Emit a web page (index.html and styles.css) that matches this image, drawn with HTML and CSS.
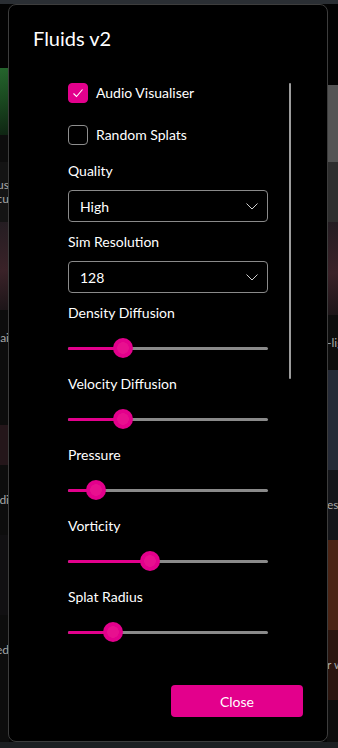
FILE: index.html
```html
<!DOCTYPE html>
<html lang="en">
<head>
<meta charset="utf-8">
<title>Fluids v2</title>
<link rel="stylesheet" href="styles.css">
</head>
<body>
<div class="bg">
  <div class="topbar"></div>
  <div class="cols">
    <div class="strip left">
      <div class="band b-black" style="height:64px"></div>
      <div class="band b-green" style="height:67px"></div>
      <div class="band b-d1" style="height:27px"></div>
      <div class="band b-d2 txt" style="height:60px"><span>bus</span><span>ecu</span></div>
      <div class="band b-pink" style="height:88px"></div>
      <div class="band b-d1 txt" style="height:55px"><span>mai</span></div>
      <div class="band b-d1" style="height:60px"></div>
      <div class="band b-red" style="height:40px"></div>
      <div class="band b-d1 txt" style="height:70px"><span>adi</span></div>
      <div class="band b-d3" style="height:80px"></div>
      <div class="band b-d1 txt" style="height:70px"><span>ed</span></div>
      <div class="band b-d1" style="height:60px"></div>
    </div>
    <div class="gap"></div>
    <div class="strip right">
      <div class="band b-black" style="height:81px"></div>
      <div class="band b-gray" style="height:77px"></div>
      <div class="band b-gray2" style="height:60px"></div>
      <div class="band b-pink" style="height:93px"></div>
      <div class="band b-d1 txt" style="height:55px"><span>-lig</span></div>
      <div class="band b-blue" style="height:100px"></div>
      <div class="band b-d4 txt" style="height:70px"><span>es.</span></div>
      <div class="band b-brown" style="height:90px"></div>
      <div class="band b-brown2 txt" style="height:70px"><span>r w</span></div>
      <div class="band b-d1" style="height:60px"></div>
    </div>
  </div>
  <div class="botbar"></div>
</div>

<div class="dialog">
  <h1 class="title">Fluids v2</h1>
  <div class="scroll">
    <div class="content">
      <label class="check">
        <span class="box on"><svg width="20" height="20" viewBox="0 0 20 20"><polyline points="5.5,10.5 8.5,13.5 14.5,6.5" fill="none" stroke="#fff" stroke-width="1.1"/></svg></span>
        <span class="check-text">Audio Visualiser</span>
      </label>
      <label class="check">
        <span class="box"></span>
        <span class="check-text">Random Splats</span>
      </label>

      <div class="field-label first">Quality</div>
      <div class="combo"><span>High</span><svg width="12" height="7" viewBox="0 0 12 7"><path d="M0.5 0.5 L6 6 L11.5 0.5" fill="none" stroke="#cfcfcf" stroke-width="1"/></svg></div>

      <div class="field-label">Sim Resolution</div>
      <div class="combo"><span>128</span><svg width="12" height="7" viewBox="0 0 12 7"><path d="M0.5 0.5 L6 6 L11.5 0.5" fill="none" stroke="#cfcfcf" stroke-width="1"/></svg></div>

      <div class="field-label">Density Diffusion</div>
      <div class="slider" style="--v:0.25"><div class="track"><div class="fill"></div></div><div class="thumb"></div></div>

      <div class="field-label">Velocity Diffusion</div>
      <div class="slider" style="--v:0.25"><div class="track"><div class="fill"></div></div><div class="thumb"></div></div>

      <div class="field-label">Pressure</div>
      <div class="slider" style="--v:0.1"><div class="track"><div class="fill"></div></div><div class="thumb"></div></div>

      <div class="field-label">Vorticity</div>
      <div class="slider" style="--v:0.4"><div class="track"><div class="fill"></div></div><div class="thumb"></div></div>

      <div class="field-label">Splat Radius</div>
      <div class="slider" style="--v:0.195"><div class="track"><div class="fill"></div></div><div class="thumb"></div></div>
    </div>
    <div class="scrollbar"></div>
  </div>
  <div class="footer">
    <button class="btn">Close</button>
  </div>
</div>
</body>
</html>
```

FILE: styles.css
```css
* { box-sizing: border-box; }
html, body {
  margin: 0;
  padding: 0;
  width: 338px;
  height: 748px;
  overflow: hidden;
  background: #0a0a0a;
  font-family: "Segoe UI", Lato, "Noto Sans", sans-serif;
  color: #fff;
}

/* background page */
.bg {
  width: 338px;
  height: 748px;
  display: flex;
  flex-direction: column;
}
.topbar {
  height: 4px;
  background: #2a2e33;
  flex: none;
}
.botbar {
  height: 6px;
  background: #1c1f22;
  flex: none;
}
.cols {
  flex: 1;
  display: flex;
  overflow: hidden;
}
.gap { flex: 1; background: #050505; }
.strip {
  display: flex;
  flex-direction: column;
  overflow: hidden;
}
.strip.left { width: 9px; }
.strip.right { width: 11px; }
.band { flex: none; }
.txt {
  display: flex;
  flex-direction: column;
  justify-content: center;
  font-size: 12px;
  line-height: 14px;
  color: #a8a8a8;
  white-space: nowrap;
}
.left .txt { align-items: flex-end; }
.right .txt { align-items: flex-start; }
.b-black { background: #030303; }
.b-green { background: linear-gradient(165deg, #25652d 0%, #1a4a20 45%, #0e2412 100%); }
.b-d1 { background: #0d0d0d; }
.b-d2 { background: #141414; }
.b-d3 { background: #111012; }
.b-d4 { background: #141519; }
.b-pink { background: linear-gradient(170deg, #241d22 0%, #3a2228 55%, #1c1518 100%); }
.b-red { background: #24161a; }
.b-gray { background: #545454; }
.b-gray2 { background: #2e2e2e; }
.b-blue { background: #252a36; }
.b-brown { background: #4a2415; }
.b-brown2 { background: #2a150f; }

/* dialog */
.dialog {
  position: absolute;
  left: 8px;
  top: 4px;
  width: 320px;
  height: 738px;
  background: #000;
  border: 1px solid #3d3d3d;
  border-radius: 8px;
  display: flex;
  flex-direction: column;
}
.title {
  margin: 0;
  padding: 19px 24px 0 24px;
  font-size: 20px;
  line-height: 28px;
  font-weight: 400;
  height: 78px;
  flex: none;
}
.scroll {
  position: relative;
  flex: 1;
}
.content {
  margin-left: 59px;
  width: 200px;
  display: flex;
  flex-direction: column;
}
.scrollbar {
  position: absolute;
  left: 280px;
  top: 0;
  width: 2px;
  height: 296px;
  background: #9c9c9c;
  border-radius: 1px;
}

.check {
  display: flex;
  align-items: center;
  gap: 8px;
  height: 20px;
  font-size: 14px;
  line-height: 20px;
  margin-bottom: 22px;
}
.check + .check { margin-bottom: 0; }
.box {
  width: 20px;
  height: 20px;
  border: 1px solid #8e8e8e;
  border-radius: 4px;
  flex: none;
  display: flex;
}
.box.on {
  background: #e3008c;
  border-color: #e3008c;
}
.box.on svg { margin: -1px; }

.field-label {
  font-size: 14px;
  line-height: 20px;
  height: 20px;
  margin-top: 10px;
  margin-bottom: 9px;
}
.field-label.first { margin-top: 16px; }

.combo {
  height: 32px;
  border: 1px solid #8a8a8a;
  border-radius: 4px;
  display: flex;
  align-items: center;
  justify-content: space-between;
  padding: 0 9px 0 11px;
  font-size: 14px;
}

.slider {
  position: relative;
  height: 32px;
  display: flex;
  align-items: center;
}
.track {
  width: 200px;
  height: 3px;
  border-radius: 2px;
  background: #8a8a8a;
  overflow: hidden;
}
.fill {
  height: 100%;
  width: calc(10px + var(--v) * 180px);
  background: #e3008c;
}
.thumb {
  position: absolute;
  top: 6px;
  left: calc(var(--v) * 180px);
  width: 20px;
  height: 20px;
  border-radius: 50%;
  background: radial-gradient(circle, #e8108f 0 40%, #e3008c 41%);
}

.footer {
  flex: none;
  display: flex;
  justify-content: flex-end;
  padding: 0 24px 24px 0;
}
.btn {
  width: 132px;
  height: 32px;
  border: none;
  border-radius: 4px;
  background: #e3008c;
  color: #fff;
  font-family: inherit;
  font-size: 14px;
  padding: 0;
}
```
